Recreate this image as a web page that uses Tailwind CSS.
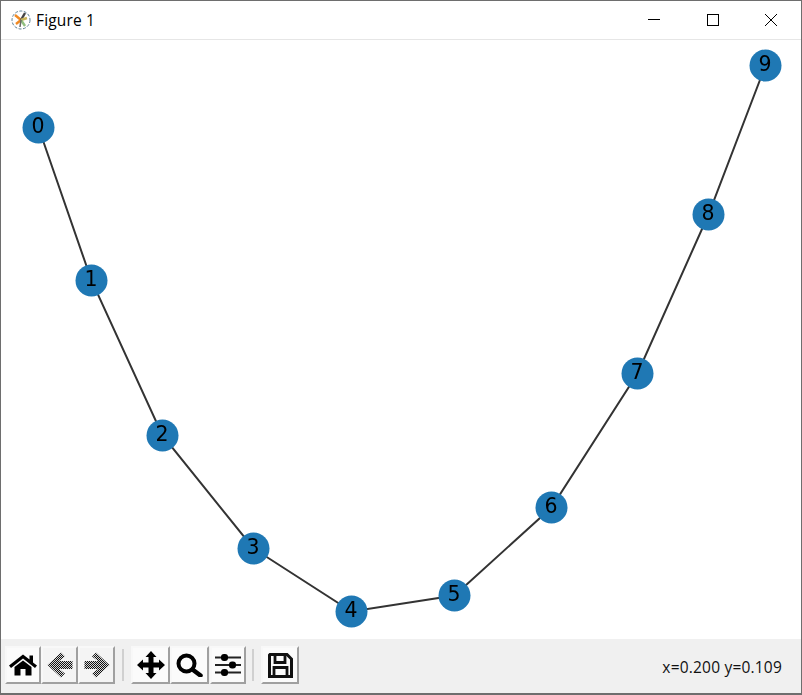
<!DOCTYPE html>
<html>
<head>
<meta charset="utf-8">
<script src="https://cdn.jsdelivr.net/npm/@tailwindcss/browser@4"></script>
</head>
<body class="bg-white overflow-hidden">
<div class="w-[802px] h-[695px] flex flex-col border border-[#6e6e6e] border-b-2 bg-white font-['Liberation_Sans',Arial,sans-serif]">
  <!-- title bar -->
  <div class="h-[39px] shrink-0 flex items-center border-b border-[#e6e6e6] bg-white">
    <svg class="ml-[10px] w-[20px] h-[20px]" viewBox="0 0 20 20">
      <circle cx="10" cy="10" r="9" fill="#fff" stroke="#5b7f95" stroke-width="1" stroke-dasharray="3 1.5"/>
      <path d="M4 5 L10 10 L5 14" fill="none" stroke="#f08a24" stroke-width="2.4"/>
      <path d="M10 10 L14 3" stroke="#444" stroke-width="2.4"/>
      <path d="M10 10 L16 8" stroke="#c9b458" stroke-width="2.4"/>
      <path d="M10 10 L14 16" stroke="#8fbf7f" stroke-width="2.4"/>
      <path d="M10 10 L9 17" stroke="#666" stroke-width="1.5"/>
    </svg>
    <span class="ml-[5px] mt-[1px] text-[15.5px] tracking-[0.15px] leading-none text-black font-['Open_Sans','Noto_Sans',sans-serif]">Figure 1</span>
    <div class="ml-auto flex items-center pr-[1px]">
      <div class="w-[58px] h-[38px] flex items-center justify-center">
        <svg class="w-[12px] h-[12px]" viewBox="0 0 12 12"><path d="M0 5.5H12" stroke="#000" stroke-width="1"/></svg>
      </div>
      <div class="w-[59px] h-[38px] flex items-center justify-center">
        <svg class="w-[12px] h-[12px]" viewBox="0 0 12 12"><rect x="0.5" y="0.5" width="11" height="11" fill="none" stroke="#000"/></svg>
      </div>
      <div class="w-[58px] h-[38px] flex items-center justify-center">
        <svg class="w-[12px] h-[12px]" viewBox="0 0 12 12"><path d="M0 0L12 12M12 0L0 12" stroke="#000" stroke-width="1"/></svg>
      </div>
    </div>
  </div>
  <!-- canvas -->
  <div class="relative h-[599px] shrink-0 bg-white">
    <svg class="absolute left-[-1px] top-[-40px] blur-[0.3px]" width="802" height="695" viewBox="0 0 802 695">
      <polyline fill="none" stroke="#333" stroke-width="2" points="38.5,127.5 91.5,280.5 162.5,435.5 253.5,548.5 351.5,611.5 454.5,595.5 551.5,507.5 637.5,373.5 708.5,214.5 765.5,65.5"/>
      <g fill="#1f78b4">
        <circle cx="38.5" cy="127.5" r="16"/><circle cx="91.5" cy="280.5" r="16"/><circle cx="162.5" cy="435.5" r="16"/><circle cx="253.5" cy="548.5" r="16"/><circle cx="351.5" cy="611.5" r="16"/><circle cx="454.5" cy="595.5" r="16"/><circle cx="551.5" cy="507.5" r="16"/><circle cx="637.5" cy="373.5" r="16"/><circle cx="708.5" cy="214.5" r="16"/><circle cx="765.5" cy="65.5" r="16"/>
      </g>
      <g fill="#000" text-anchor="middle" font-family="DejaVu Sans" font-size="20.5">
        <text x="38" y="133">0</text><text x="91" y="286">1</text><text x="162" y="441">2</text><text x="253" y="554">3</text><text x="351" y="617">4</text><text x="454" y="601">5</text><text x="551" y="513">6</text><text x="637" y="379">7</text><text x="708" y="220">8</text><text x="765" y="71">9</text>
      </g>
    </svg>
  </div>
  <!-- toolbar -->
  <div class="flex-1 bg-[#f0f0f0] flex items-start pl-[4px] pt-[7px]">
    <svg width="0" height="0" class="absolute"><defs>
      <pattern id="dith" width="2" height="2" patternUnits="userSpaceOnUse"><rect width="2" height="2" fill="#d8d8d8"/><rect width="1" height="1" fill="#111"/><rect x="1" y="1" width="1" height="1" fill="#111"/></pattern>
    </defs></svg>
    <div class="flex">
      <div class="w-[36px] h-[38px] bg-[#fbfbfb] border-2 border-t-[#f8f8f8] border-l-[#f8f8f8] border-r-[#a0a0a0] border-b-[#a0a0a0] flex items-center justify-center">
        <svg class="w-[28px] h-[22px] blur-[0.4px]" viewBox="0 0 28 22"><path d="M14 0.5 L20.5 5.5 V1.5 H24 V8.5 L28 11.5 L26 14 L14 4.5 L2 14 L0 11.5 Z M5.5 13 L14 6.5 L22.5 13 V21.5 H16.5 V15 H11.5 V21.5 H5.5 Z" fill="#000"/></svg>
      </div>
      <div class="w-[37px] h-[38px] bg-[#f4f4f4] border-2 border-t-[#f8f8f8] border-l-[#f8f8f8] border-r-[#a0a0a0] border-b-[#a0a0a0] flex items-center justify-center">
        <svg class="w-[26px] h-[26px] blur-[0.3px]" viewBox="0 0 26 26"><path d="M14 0.5 L18 4.5 L12 9 H25.5 V17 H12 L18 21.5 L14 25.5 L0.5 13 Z" fill="url(#dith)"/></svg>
      </div>
      <div class="w-[37px] h-[38px] bg-[#f4f4f4] border-2 border-t-[#f8f8f8] border-l-[#f8f8f8] border-r-[#a0a0a0] border-b-[#a0a0a0] flex items-center justify-center">
        <svg class="w-[26px] h-[26px] blur-[0.3px]" viewBox="0 0 26 26"><path d="M12 0.5 L8 4.5 L14 9 H0.5 V17 H14 L8 21.5 L12 25.5 L25.5 13 Z" fill="url(#dith)"/></svg>
      </div>
    </div>
    <div class="ml-[7px] mt-[3px] w-[2px] h-[32px] bg-[#d0d0d0]"></div>
    <div class="ml-[7px] flex">
      <div class="w-[39px] h-[38px] bg-[#fbfbfb] border-2 border-t-[#f8f8f8] border-l-[#f8f8f8] border-r-[#a0a0a0] border-b-[#a0a0a0] flex items-center justify-center">
        <svg class="w-[28px] h-[28px] blur-[0.4px]" viewBox="0 0 28 28"><path d="M14 0 L19.5 6 H16.5 V11.5 H22 V8.5 L28 14 L22 19.5 V16.5 H16.5 V22 H19.5 L14 28 L8.5 22 H11.5 V16.5 H6 V19.5 L0 14 L6 8.5 V11.5 H11.5 V6 H8.5 Z" fill="#000"/></svg>
      </div>
      <div class="w-[39px] h-[38px] bg-[#fbfbfb] border-2 border-t-[#f8f8f8] border-l-[#f8f8f8] border-r-[#a0a0a0] border-b-[#a0a0a0] flex items-center justify-center">
        <svg class="w-[28px] h-[24px] blur-[0.4px]" viewBox="0 0 28 24"><circle cx="10.5" cy="10.5" r="8" fill="none" stroke="#000" stroke-width="4"/><path d="M16.5 16.5 L24.5 22.5" stroke="#000" stroke-width="4.5" stroke-linecap="round"/></svg>
      </div>
      <div class="ml-[1px] w-[36px] h-[38px] bg-[#fbfbfb] border-2 border-t-[#f8f8f8] border-l-[#f8f8f8] border-r-[#a0a0a0] border-b-[#a0a0a0] flex items-center justify-center">
        <svg class="w-[26px] h-[22px] blur-[0.4px]" viewBox="0 0 26 22"><path d="M0 3.5H26M0 11H26M0 18.5H26" stroke="#222" stroke-width="2"/><rect x="6" y="0" width="7" height="7" rx="3" fill="#000"/><rect x="14" y="7.5" width="7" height="7" rx="3" fill="#000"/><rect x="6" y="15" width="7" height="7" rx="3" fill="#000"/></svg>
      </div>
    </div>
    <div class="ml-[6px] mt-[3px] w-[2px] h-[32px] bg-[#d0d0d0]"></div>
    <div class="ml-[7px] w-[38px] h-[38px] bg-[#fbfbfb] border-2 border-t-[#f8f8f8] border-l-[#f8f8f8] border-r-[#a0a0a0] border-b-[#a0a0a0] flex items-center justify-center">
      <svg class="w-[25px] h-[25px] blur-[0.4px]" viewBox="0 0 25 25"><path d="M2 1.5 H19 L23.5 6 V23.5 H1.5 V2 Z" fill="none" stroke="#111" stroke-width="3"/><path d="M7 2 V9.5 H17 V2" fill="none" stroke="#111" stroke-width="2.8"/><path d="M6 23 V14.5 H19 V23" fill="none" stroke="#111" stroke-width="2.8"/></svg>
    </div>
    <span class="ml-auto mr-[19px] mt-[12px] text-[15.5px] leading-[18px] text-[#111] font-['Open_Sans','Noto_Sans',sans-serif] tracking-[0.2px]">x=0.200 y=0.109</span>
  </div>
</div>
</body>
</html>
